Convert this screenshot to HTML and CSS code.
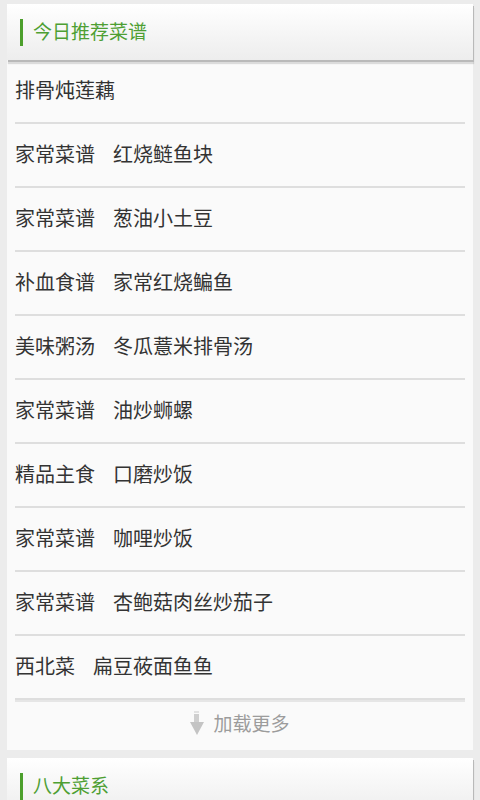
FILE: index.html
```html
<!DOCTYPE html>
<html lang="zh-CN">
<head>
<meta charset="utf-8">
<title>今日推荐菜谱</title>
<link rel="stylesheet" href="styles.css">
</head>
<body>
<div class="page">
  <div class="section-head"><span class="bar"></span><span class="title">今日推荐菜谱</span></div>
  <div class="card">
    <ul class="list">
      <li class="row">排骨炖莲藕</li>
      <li class="row"><span class="cat">家常菜谱</span>红烧鲢鱼块</li>
      <li class="row"><span class="cat">家常菜谱</span>葱油小土豆</li>
      <li class="row"><span class="cat">补血食谱</span>家常红烧鳊鱼</li>
      <li class="row"><span class="cat">美味粥汤</span>冬瓜薏米排骨汤</li>
      <li class="row"><span class="cat">家常菜谱</span>油炒蛳螺</li>
      <li class="row"><span class="cat">精品主食</span>口磨炒饭</li>
      <li class="row"><span class="cat">家常菜谱</span>咖哩炒饭</li>
      <li class="row"><span class="cat">家常菜谱</span>杏鲍菇肉丝炒茄子</li>
      <li class="row"><span class="cat">西北菜</span>扁豆莜面鱼鱼</li>
    </ul>
    <div class="more">
      <svg class="more-icon" width="14" height="25" viewBox="0 0 14 25">
        <rect x="4" y="0" width="5" height="2" fill="#e2e2e2"/>
        <rect x="4" y="3" width="5" height="8" fill="#cfcfcf"/>
        <polygon points="0,11 14,11 7,24" fill="#c4c4c4"/>
      </svg>
      <span class="more-text">加载更多</span>
    </div>
  </div>
  <div class="section-head second"><span class="bar"></span><span class="title">八大菜系</span></div>
</div>
</body>
</html>
```
FILE: styles.css
```css
html, body {
  margin: 0;
  padding: 0;
  background: #ececec;
  height: 800px;
  overflow: hidden;
}
body {
  font-family: "Noto Sans CJK SC", "Noto Sans", sans-serif;
}
.page {
  padding: 4px 7px 0 7px;
}
.section-head {
  position: relative;
  z-index: 1;
  height: 56px;
  display: flex;
  align-items: center;
  padding-left: 13px;
  background: linear-gradient(#ffffff, #ededed);
  box-shadow: 1px 2px 0 #b9b9b9, 1px 4px 1px rgba(0,0,0,0.12);
}
.section-head.second {
  margin-top: 8px;
}
.bar {
  width: 3px;
  height: 27px;
  background: #4c9f2c;
  margin-right: 10px;
}
.title {
  font-size: 19px;
  color: #4e9f33;
  line-height: 1;
  margin-bottom: 3px;
}
.card {
  background: #fafafa;
}
.list {
  list-style: none;
  margin: 0;
  padding: 0;
}
.row {
  margin: 0 8px;
  height: 60px;
  line-height: 60px;
  padding-bottom: 2px;
  border-bottom: 2px solid #dedede;
  font-size: 20px;
  color: #333333;
  white-space: nowrap;
}
.cat {
  margin-right: 18px;
}
.more {
  border-top: 2px solid #e6e6e6;
  margin: 0 8px;
  height: 40px;
  padding-bottom: 8px;
  display: flex;
  align-items: center;
  justify-content: center;
}
.more-icon {
  margin-right: 9px;
  margin-top: 2px;
}
.more-text {
  font-size: 19px;
  color: #9c9c9c;
}
```
